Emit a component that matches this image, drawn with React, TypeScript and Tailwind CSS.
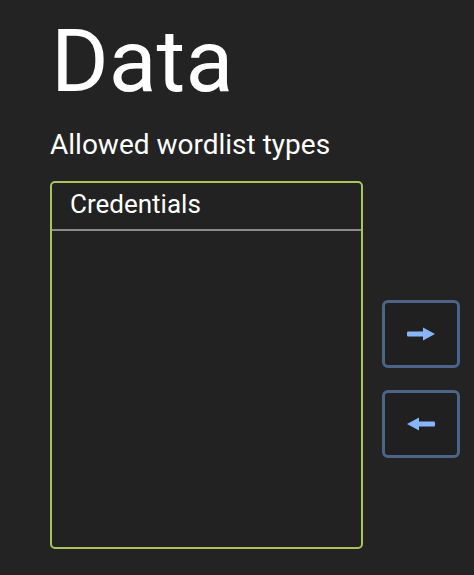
import React from 'react';

const Arrow: React.FC<{ dir: 'right' | 'left' }> = ({ dir }) => (
    <svg
        width="30"
        height="16"
        viewBox="0 0 30 16"
        className={dir === 'left' ? 'rotate-180' : ''}
    >
        <rect x="1" y="5.5" width="18" height="5" rx="1" fill="#8ab4f8" />
        <path d="M17 1.5 L29 8 L17 14.5 Z" fill="#8ab4f8" />
    </svg>
);

const MoveButton: React.FC<{ dir: 'right' | 'left' }> = ({ dir }) => (
    <button className="flex h-[68px] w-[78px] items-center justify-center rounded-md border-[3px] border-[#4b6487] bg-[#202020]">
        <Arrow dir={dir} />
    </button>
);

export default function App() {
    return (
        <div
            className="min-h-screen bg-[#232323] text-white"
            style={{ fontFamily: 'Roboto, "Noto Sans", sans-serif' }}
        >
            <div className="pl-[50px] pt-[8px]">
                <h1 className="ml-[1px] text-[88px] leading-[106px] font-normal">Data</h1>
                <h2 className="mt-[14px] text-[28px] leading-[34px]">Allowed wordlist types</h2>
                <div className="mt-[19px] flex items-start">
                    <div className="h-[368px] w-[313px] rounded-[5px] border-2 border-[#a9c45a] bg-[#222222]">
                        <div className="border-b-2 border-[#8a8a8a] px-[18px] pt-[6px] pb-[10px] text-[26px] leading-[30px]">
                            Credentials
                        </div>
                    </div>
                    <div className="ml-[19px] mt-[119px] flex flex-col gap-[22px]">
                        <MoveButton dir="right" />
                        <MoveButton dir="left" />
                    </div>
                </div>
            </div>
        </div>
    );
}
